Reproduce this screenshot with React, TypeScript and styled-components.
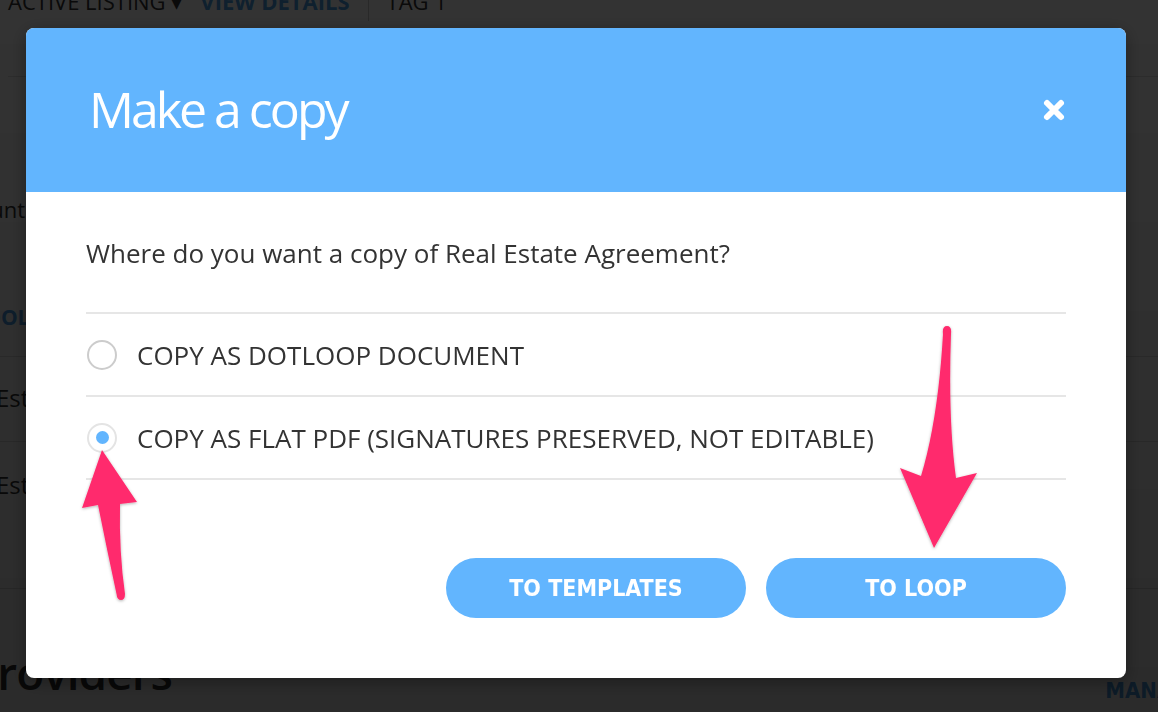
import * as React from 'react';
import styled, { createGlobalStyle } from 'styled-components';

const GlobalStyle = createGlobalStyle`
  html, body {
    margin: 0;
    padding: 0;
    background: #ffffff;
    font-family: "Open Sans", "Noto Sans", sans-serif;
  }
`;

const BLUE = '#62b5fe';
const PINK = '#ff2c6d';

/* ---------- page behind the dialog ---------- */

const Page = styled.div`
  width: 100vw;
  height: 712px;
  overflow: hidden;
  background: #ffffff;
  color: #333333;
  display: flex;
  flex-direction: column;
`;

const TopBar = styled.div`
  display: flex;
  align-items: flex-start;
  gap: 18px;
  margin-top: -19px;
  margin-left: 8px;
  height: 95px;
  line-height: 40px;
  border-bottom: 1px solid #dddddd;
  font-size: 22px;
  text-transform: uppercase;
  white-space: nowrap;
`;

const NavItem = styled.span<{ $link?: boolean }>`
  color: ${p => (p.$link ? '#4c9fe6' : '#333333')};
  font-weight: ${p => (p.$link ? 700 : 400)};
`;

const NavDivider = styled.span`
  width: 1px;
  height: 40px;
  background: #cccccc;
`;

const Side = styled.div`
  display: flex;
  flex-direction: column;
  margin-left: -58px;
  white-space: nowrap;
`;

const SideText = styled.div`
  font-size: 22px;
  line-height: 30px;
  margin-top: 117px;
`;

const SideHead = styled.div`
  font-size: 21px;
  font-weight: 700;
  color: #4c9fe6;
  text-transform: uppercase;
  line-height: 30px;
  height: 133px;
  padding: 78px 0 0 30px;
  box-sizing: border-box;
  border-bottom: 1px solid #dddddd;
  width: 1300px;
`;

const SideRow = styled.div<{ $h: number; $pad: number }>`
  font-size: 24px;
  line-height: 30px;
  height: ${p => p.$h}px;
  padding-top: ${p => p.$pad}px;
  box-sizing: border-box;
  border-bottom: 1px solid #dddddd;
  width: 1300px;
`;

const BottomRow = styled.div`
  display: flex;
  align-items: flex-end;
  justify-content: space-between;
  margin-top: 52px;
`;

const BigTitle = styled.div`
  font-size: 46px;
  line-height: 62px;
  font-weight: 600;
  letter-spacing: -1px;
  margin-left: -30px;
`;

const ManageLink = styled.div`
  font-size: 22px;
  font-weight: 700;
  color: #4c9fe6;
  margin-right: -44px;
  margin-bottom: 0;
  font-stretch: condensed;
  font-family: "Liberation Sans Narrow", "DejaVu Sans", sans-serif;
`;

/* ---------- dialog ---------- */

const Backdrop = styled.div`
  position: fixed;
  inset: 0;
  background: linear-gradient(180deg, rgba(0, 0, 0, 0.8), rgba(0, 0, 0, 0.83));
  display: flex;
  align-items: flex-start;
  padding: 28px 0 0 26px;
`;

const Dialog = styled.div`
  width: 1100px;
  height: 650px;
  background: #ffffff;
  border-radius: 8px;
  overflow: hidden;
  display: flex;
  flex-direction: column;
  box-shadow: 0 4px 18px rgba(0, 0, 0, 0.35);
`;

const Header = styled.div`
  height: 164px;
  flex: none;
  background: ${BLUE};
  display: flex;
  align-items: center;
  justify-content: space-between;
  padding: 0 60px 0 63px;
`;

const Title = styled.h1`
  margin: 0;
  color: #ffffff;
  font-size: 50px;
  font-weight: 400;
  letter-spacing: -3px;
  line-height: 1;
  padding-bottom: 2px;
`;

const CloseButton = styled.button`
  border: 0;
  background: none;
  padding: 0;
  width: 24px;
  height: 24px;
  display: flex;
  cursor: pointer;
`;

const Body = styled.div`
  flex: 1;
  display: flex;
  flex-direction: column;
  padding: 46px 60px 60px 60px;
`;

const Question = styled.p`
  margin: 0 0 44px 0;
  font-size: 26px;
  line-height: 30px;
  color: #333333;
`;

const OptionList = styled.div`
  border-top: 2px solid #e6e6e6;
  display: flex;
  flex-direction: column;
`;

const Option = styled.label`
  height: 81px;
  display: flex;
  align-items: center;
  gap: 20px;
  border-bottom: 2px solid #e6e6e6;
  cursor: pointer;
  font-size: 26px;
  color: #333333;
  text-transform: uppercase;
`;

const Radio = styled.span<{ $checked?: boolean }>`
  width: 30px;
  height: 30px;
  flex: none;
  box-sizing: border-box;
  border-radius: 50%;
  border: 2px solid ${p => (p.$checked ? '#e4e4e4' : '#cccccc')};
  display: flex;
  align-items: center;
  justify-content: center;
  margin-left: 1px;
  &::after {
    content: '';
    width: 13px;
    height: 13px;
    border-radius: 50%;
    background: ${p => (p.$checked ? BLUE : 'transparent')};
  }
`;

const Actions = styled.div`
  margin-top: auto;
  display: flex;
  justify-content: flex-end;
  gap: 20px;
`;

const PillButton = styled.button`
  width: 300px;
  height: 60px;
  border: 0;
  border-radius: 30px;
  background: ${BLUE};
  color: #ffffff;
  font-family: "Liberation Sans Narrow", "DejaVu Sans", sans-serif;
  font-stretch: condensed;
  font-weight: 700;
  font-size: 23px;
  text-transform: uppercase;
  cursor: pointer;
`;

const Annotations = styled.svg`
  position: fixed;
  inset: 0;
  width: 100%;
  height: 100%;
  pointer-events: none;
`;

const options = [
  { id: 'doc', label: 'Copy as dotloop document', checked: false },
  { id: 'pdf', label: 'Copy as flat PDF (signatures preserved, not editable)', checked: true },
];

export default function App() {
  return (
    <>
      <GlobalStyle />
      <Page>
        <TopBar>
          <NavItem>Active Listing ▾</NavItem>
          <NavItem $link>View Details</NavItem>
          <NavDivider />
          <NavItem>Tag 1</NavItem>
        </TopBar>
        <Side>
          <SideText>Account</SideText>
          <SideHead>Tools</SideHead>
          <SideRow $h={85} $pad={26}>Real Estate Agreement</SideRow>
          <SideRow $h={147} $pad={28}>Real Estate Disclosure</SideRow>
        </Side>
        <BottomRow>
          <BigTitle>Providers</BigTitle>
          <ManageLink>MANAGE</ManageLink>
        </BottomRow>
      </Page>

      <Backdrop>
        <Dialog>
          <Header>
            <Title>Make a copy</Title>
            <CloseButton aria-label="Close">
              <svg width="24" height="24" viewBox="0 0 24 24">
                <path d="M5 5 L19 19 M19 5 L5 19" stroke="#ffffff" strokeWidth="6" strokeLinecap="round" />
              </svg>
            </CloseButton>
          </Header>
          <Body>
            <Question>Where do you want a copy of Real Estate Agreement?</Question>
            <OptionList>
              {options.map(o => (
                <Option key={o.id}>
                  <Radio $checked={o.checked} />
                  {o.label}
                </Option>
              ))}
            </OptionList>
            <Actions>
              <PillButton>To Templates</PillButton>
              <PillButton>To Loop</PillButton>
            </Actions>
          </Body>
        </Dialog>
      </Backdrop>

      <Annotations viewBox="0 0 1158 712">
        <defs>
          <filter id="arrowShadow" x="-20%" y="-20%" width="140%" height="140%">
            <feDropShadow dx="0" dy="1" stdDeviation="1.5" floodColor="#000" floodOpacity="0.3" />
          </filter>
        </defs>
        <g fill={PINK} filter="url(#arrowShadow)">
          <path d="M102 450 L137 502 L120 504 Q119 552 125 594 Q125 600 121 600 Q117 600 116.5 594 Q107 550 98 505 L82 508 Z" />
          <path d="M943 334 Q942 326 947 326 Q952 326 951 334 Q948 420 956 478 L977 473 L934 548 L900 468 L921 476 Q938 420 943 334 Z" />
        </g>
      </Annotations>
    </>
  );
}
